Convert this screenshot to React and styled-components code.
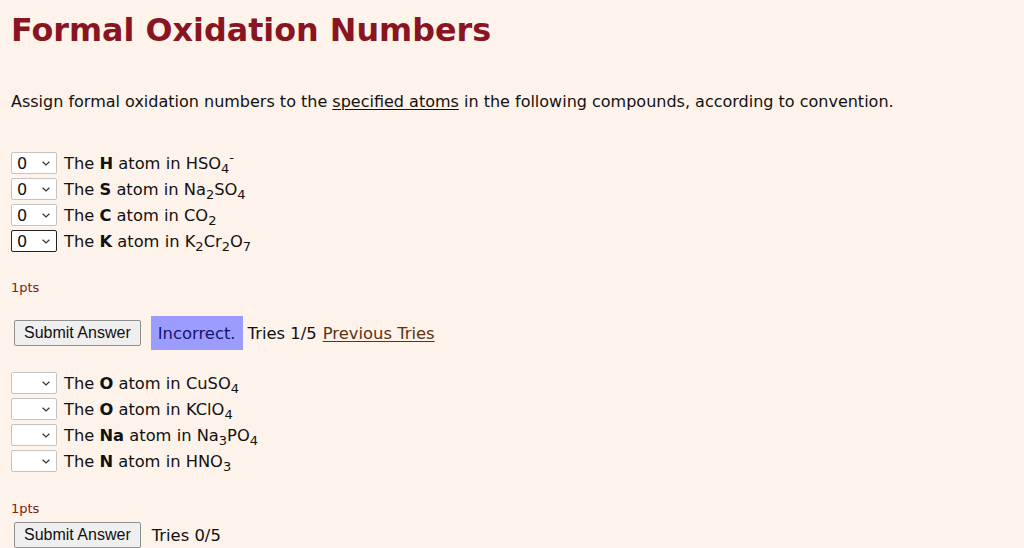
import React from "react"
import styled, { createGlobalStyle } from "styled-components"

const Global = createGlobalStyle`
  html, body {
    margin: 0;
    padding: 0;
    background: #fef3eb;
  }
  body {
    font-family: "DejaVu Sans", Verdana, sans-serif;
    color: #111;
  }
`

const Page = styled.div`
  padding: 10px 11px;
  min-height: 548px;
  box-sizing: border-box;
`

const Title = styled.h1`
  margin: 0;
  font-size: 31.8px;
  font-weight: bold;
  color: #8a1522;
  line-height: 40px;
`

const Intro = styled.p`
  margin: 42px 0 0;
  font-size: 16px;
  line-height: 20px;

  u {
    text-underline-offset: 2px;
  }
`

const Question = styled.div`
  display: flex;
  flex-direction: column;
  gap: 4px;
  margin-top: ${(p) => p.$top}px;
`

const Row = styled.div`
  display: flex;
  align-items: center;
  gap: 7px;
  height: 22px;
  font-size: 16.3px;

  sub, sup {
    font-size: 13px;
    line-height: 0;
  }
  sub {
    vertical-align: -4px;
  }
  sup {
    vertical-align: 7px;
  }
`

const SelectWrap = styled.span`
  position: relative;
  display: inline-flex;

  svg {
    position: absolute;
    right: 7px;
    top: 9px;
    pointer-events: none;
  }
`

const Select = styled.select`
  appearance: none;
  width: 46px;
  height: 22px;
  box-sizing: border-box;
  font-family: "DejaVu Sans", Verdana, sans-serif;
  font-size: 16px;
  padding: 0 0 0 5px;
  background: #fff;
  color: #111;
  border: 1px solid ${(p) => (p.$focus ? "#222" : "#c4c4c4")};
  border-radius: 2px;
  outline: none;
`

const Pts = styled.div`
  font-size: 13px;
  color: #7a2417;
  margin-top: ${(p) => p.$top}px;
`

const Actions = styled.div`
  display: flex;
  align-items: center;
  margin-top: ${(p) => p.$top}px;
  margin-left: 3px;
  font-size: 16.4px;
`

const Button = styled.button`
  font-family: "Liberation Sans", Arial, sans-serif;
  font-size: 16px;
  height: 26px;
  padding: 0 9px;
  background: #efefef;
  color: #111;
  border: 1px solid #8f8f8f;
  border-radius: 2px;
`

const Badge = styled.span`
  background: #9c9cff;
  color: #14146e;
  padding: 0 7px;
  height: 34px;
  display: inline-flex;
  align-items: center;
  margin-left: 10px;
`

const Tries = styled.span`
  margin-left: ${(p) => p.$gap}px;
`

const Link = styled.a`
  color: #5b3413;
  margin-left: 6px;
  text-underline-offset: 2px;
`

const Chevron = () => (
  <svg width="8" height="5" viewBox="0 0 8 5">
    <path d="M0.6 0.7 L4 4 L7.4 0.7" fill="none" stroke="#333" strokeWidth="1.2" />
  </svg>
)

const Atom = ({ el, children, value, focus }) => (
  <Row>
    <SelectWrap>
      <Select $focus={focus} defaultValue={value}>
        <option value=""></option>
        <option value="0">0</option>
      </Select>
      <Chevron />
    </SelectWrap>
    <span>
      The <b>{el}</b> atom in {children}
    </span>
  </Row>
)

export default function App() {
  return (
    <Page>
      <Global />
      <Title>Formal Oxidation Numbers</Title>
      <Intro>
        Assign formal oxidation numbers to the <u>specified atoms</u> in the following compounds,
        according to convention.
      </Intro>

      <Question $top={40}>
        <Atom el="H" value="0">
          HSO<sub>4</sub>
          <sup>-</sup>
        </Atom>
        <Atom el="S" value="0">
          Na<sub>2</sub>SO<sub>4</sub>
        </Atom>
        <Atom el="C" value="0">
          CO<sub>2</sub>
        </Atom>
        <Atom el="K" value="0" focus>
          K<sub>2</sub>Cr<sub>2</sub>O<sub>7</sub>
        </Atom>
      </Question>
      <Pts $top={28}>1pts</Pts>
      <Actions $top={21}>
        <Button>Submit Answer</Button>
        <Badge>Incorrect.</Badge>
        <Tries $gap={5}>Tries 1/5</Tries>
        <Link href="#">Previous Tries</Link>
      </Actions>

      <Question $top={22}>
        <Atom el="O" value="">
          CuSO<sub>4</sub>
        </Atom>
        <Atom el="O" value="">
          KClO<sub>4</sub>
        </Atom>
        <Atom el="Na" value="">
          Na<sub>3</sub>PO<sub>4</sub>
        </Atom>
        <Atom el="N" value="">
          HNO<sub>3</sub>
        </Atom>
      </Question>
      <Pts $top={29}>1pts</Pts>
      <Actions $top={6}>
        <Button>Submit Answer</Button>
        <Tries $gap={11}>Tries 0/5</Tries>
      </Actions>
    </Page>
  )
}
